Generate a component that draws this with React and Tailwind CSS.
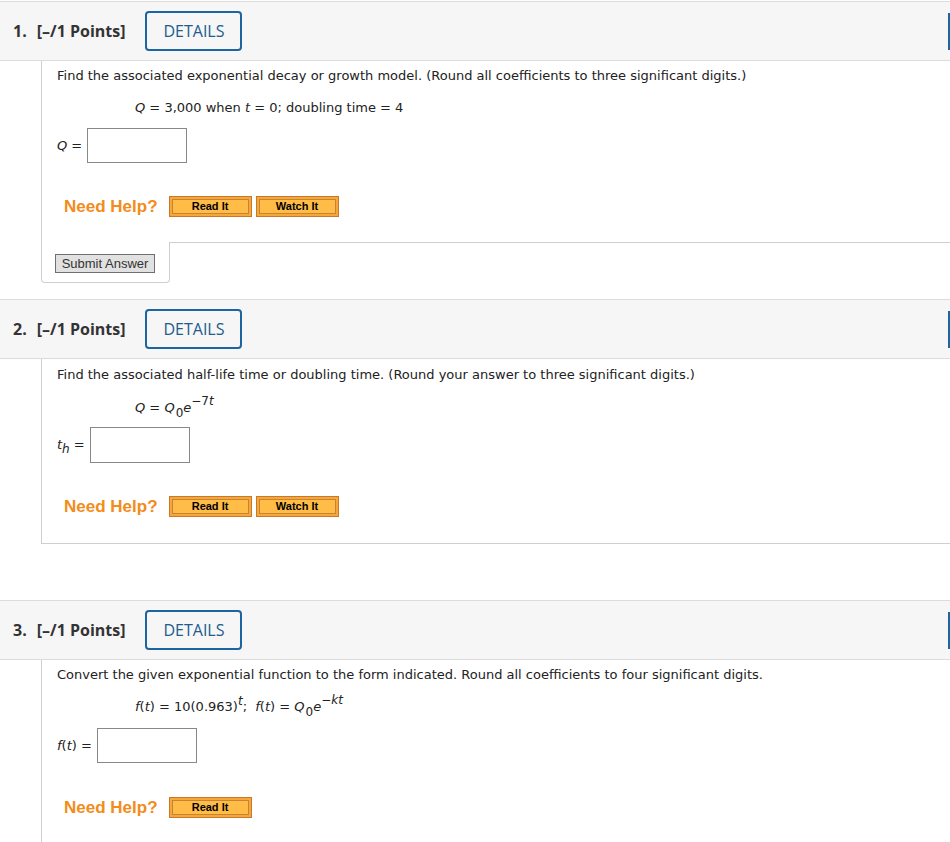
import React from 'react';

const body = { fontFamily: '"DejaVu Sans", Verdana, sans-serif' };
const open = { fontFamily: '"Open Sans", "Liberation Sans", sans-serif' };
const arial = { fontFamily: '"Liberation Sans", Arial, sans-serif' };

const QuestionHeader = ({ num }) => (
  <div className="flex items-center h-[60px] bg-[#f6f6f6] border-y border-[#dcdcdc]" style={open}>
    <span className="ml-[13px] text-[16px] font-bold text-[#333]">{num}.</span>
    <span className="ml-[10px] text-[16px] font-bold text-[#333]">[–/1 Points]</span>
    <div className="ml-[20px] w-[97px] h-[40px] flex items-center justify-center border-2 border-[#1d65a0] rounded-[4px] text-[16px] font-medium text-[#235b8d]">
      DETAILS
    </div>
    <div className="ml-auto w-[2px] h-[37px] bg-[#1d65a0]" />
  </div>
);

const HelpButton = ({ children }) => (
  <div className="w-[83px] h-[21px] border border-[#c8782a] bg-[#f7a73a] p-[2px]">
    <div className="h-full flex items-center justify-center border border-[#c48434] bg-[#ffbc47] text-[11px] font-bold text-black" style={arial}>
      {children}
    </div>
  </div>
);

const NeedHelp = ({ watch }) => (
  <div className="flex items-center h-[21px] ml-[7px]">
    <span className="text-[17px] font-bold text-[#f28c1a] mr-[11px]" style={arial}>Need Help?</span>
    <HelpButton>Read It</HelpButton>
    {watch && <div className="ml-[4px]"><HelpButton>Watch It</HelpButton></div>}
  </div>
);

const AnswerBox = ({ className }) => (
  <div className={`h-[35px] w-[100px] border border-[#888] bg-white ${className || ''}`} />
);

export default function App() {
  return (
    <div className="w-[950px] overflow-hidden bg-white text-[#222] pt-[1px]" style={body}>
      {/* QUESTION 1 */}
      <QuestionHeader num={1} />
      <div className="ml-[41px] border-l border-[#cfcfcf] pl-[15px] pt-[5px] text-[13px]">
        <p className="leading-[20px]">
          Find the associated exponential decay or growth model. (Round all coefficients to three significant digits.)
        </p>
        <p className="leading-[20px] mt-[12px] ml-[78px]">
          <i>Q</i> = 3,000 when <i>t</i> = 0; doubling time = 4
        </p>
        <div className="flex items-center mt-[10px] gap-[5px]">
          <span><i>Q</i> =</span>
          <AnswerBox />
        </div>
        <div className="mt-[33px] pb-[25px]">
          <NeedHelp watch />
        </div>
      </div>
      <div className="flex">
        <div className="ml-[41px] w-[129px] h-[41px] border-l border-b border-r border-[#cfcfcf] rounded-b-[4px] pl-[13px] pt-[12px]">
          <button className="block w-[100px] h-[19px] bg-[#e1e1e1] border border-[#707070] text-[13px] text-[#333] leading-none" style={arial}>
            Submit Answer
          </button>
        </div>
        <div className="flex-1 border-t border-[#cfcfcf]" />
      </div>

      {/* QUESTION 2 */}
      <div className="mt-[16px]">
        <QuestionHeader num={2} />
      </div>
      <div className="ml-[41px] border-l border-b border-[#cfcfcf] pl-[15px] pt-[6px] text-[13px]">
        <p className="leading-[20px]">
          Find the associated half-life time or doubling time. (Round your answer to three significant digits.)
        </p>
        <p className="leading-[20px] mt-[13px] ml-[78px]">
          <i>Q</i> = <i>Q</i><span className="relative top-[5px] text-[12px] ml-[1px]">0</span><i>e</i>
          <span className="relative top-[-7px] text-[12px]">−7<i>t</i></span>
        </p>
        <div className="flex items-center mt-[9px] gap-[5px]">
          <span>
            <i>t</i><span className="relative top-[4px] text-[12px]"><i>h</i></span> =
          </span>
          <AnswerBox className="h-[36px]" />
        </div>
        <div className="mt-[33px] pb-[26px]">
          <NeedHelp watch />
        </div>
      </div>

      {/* QUESTION 3 */}
      <div className="mt-[56px]">
        <QuestionHeader num={3} />
      </div>
      <div className="ml-[41px] border-l border-[#cfcfcf] pl-[15px] pt-[5px] text-[13px] pb-[30px]">
        <p className="leading-[20px]">
          Convert the given exponential function to the form indicated. Round all coefficients to four significant digits.
        </p>
        <p className="leading-[20px] mt-[12px] ml-[78px]">
          <i>f</i>(<i>t</i>) = 10(0.963)<span className="relative top-[-6px] text-[12px]"><i>t</i></span>;&nbsp; <i>f</i>(<i>t</i>) = <i>Q</i>
          <span className="relative top-[5px] text-[12px] ml-[1px]">0</span><i>e</i>
          <span className="relative top-[-7px] text-[12px]">−<i>kt</i></span>
        </p>
        <div className="flex items-center mt-[11px] gap-[5px]">
          <span><i>f</i>(<i>t</i>) =</span>
          <AnswerBox />
        </div>
        <div className="mt-[34px]">
          <NeedHelp />
        </div>
      </div>
    </div>
  );
}
